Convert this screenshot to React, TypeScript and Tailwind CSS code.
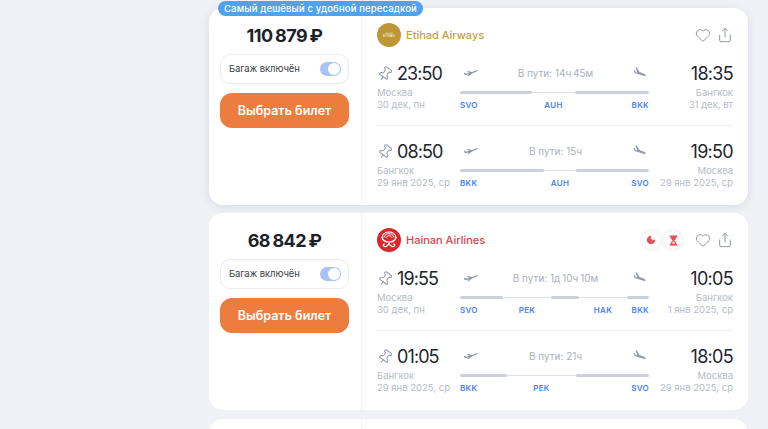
import { Heart, Moon, Pin, Share } from "lucide-react";

interface Segment {
  width: number;
  thin?: boolean;
  code?: string;
}

interface Leg {
  depTime: string;
  depCity: string;
  depDate: string;
  arrTime: string;
  arrCity: string;
  arrDate: string;
  duration: string;
  segments: Segment[];
}

const Plane: React.FC<{ landing?: boolean }> = ({ landing }) => (
  <svg viewBox="0 0 16 16" className="w-4 h-4 text-[#8f98a8]" fill="currentColor">
    {landing ? (
      <path d="M3.500 2.200l1.400.3 2.600 4.500 4 1.600c1.200.5 2.500 1.200 2.300 1.900-.2.7-1.700.5-3 .1L2.600 8.100 1.600 4.800l1 .2 1.400 2.200 1.300.4z" />
    ) : (
      <path d="M14.500 5.200c.4.5-.3 1.100-1.300 1.500L9 8.400l-3.200 2.600-1.600.3L6 9.300l-2.500.8-1.800-.2-.9-2.100.9-.1 1.500 1 3-.9L3.800 6.300 5 6l4 1 3.300-1.300c1-.4 1.900-.9 2.200-.5z" />
    )}
  </svg>
);

const EtihadLogo = () => (
  <div className="w-6 h-6 rounded-full bg-[#bd9636] flex flex-col items-center justify-center text-white text-[3px] leading-[3px] font-['Liberation_Sans',sans-serif]">
    <span className="opacity-80">الاتحاد</span>
    <span className="tracking-[0.2px]">ETIHAD</span>
  </div>
);

const HainanLogo = () => (
  <svg viewBox="0 0 24 24" className="w-6 h-6">
    <circle cx="12" cy="12" r="12" fill="#d9272e" />
    <g fill="none" stroke="#fff" strokeLinecap="round">
      <path d="M5 9.500C6 5.500 9 4 12 4s6 1.500 7 5.500" strokeWidth="1.100" />
      <path d="M7 9c1-2.500 3-3.300 5-3.300S16 6.500 17 9" strokeWidth="1" />
      <path d="M9 9.500c.8-1.200 1.800-1.700 3-1.700s2.200.5 3 1.700" strokeWidth="1" />
      <path d="M5 9.500c.8 3 3.500 4.500 7 4.500s6.200-1.500 7-4.500" strokeWidth="1.200" />
      <path d="M12 15.500c-1.500 3-3.500 3.500-5 2.800-1.200-.6-1-2.300.4-2.300" strokeWidth="1.200" />
      <path d="M12 15.500c1.500 3 3.500 3.500 5 2.800 1.200-.6 1-2.300-.4-2.300" strokeWidth="1.200" />
    </g>
  </svg>
);

const HourglassIcon = () => (
  <svg viewBox="0 0 12 12" className="w-[11px] h-[11px]" fill="#ea4b55">
    <rect x="2" y="0.500" width="8" height="1.800" />
    <rect x="2" y="9.700" width="8" height="1.800" />
    <path d="M3 2.300h6v1.500L6.900 6 9 8.200v1.500H3V8.200L5.100 6 3 3.800z" />
    <path d="M4.200 9.200v-.6L6 6.800l1.800 1.800v.6z" fill="#fff" />
  </svg>
);

const Route: React.FC<{ segments: Segment[] }> = ({ segments }) => (
  <div className="flex w-[189px]">
    {segments.map((seg, index) => {
      const last = index === segments.length - 1;
      return (
        <div key={index} style={{ width: seg.width }} className="shrink-0 flex flex-col">
          <div className="h-[6px] flex items-center">
            {seg.thin ? (
              <div className="h-px w-full bg-[#dde1e8]" />
            ) : (
              <div className="h-[3px] w-full rounded-full bg-[#cbd1da]" />
            )}
          </div>
          <div
            className={`mt-[5px] h-[10px] text-[8px] leading-[10px] font-semibold text-[#4a80f5] tracking-[0.3px] flex ${
              seg.thin ? "justify-center" : last ? "justify-end" : "justify-start"
            }`}
          >
            {seg.code}
          </div>
        </div>
      );
    })}
  </div>
);

const LegRow: React.FC<{ leg: Leg }> = ({ leg }) => (
  <div className="flex">
    <div className="w-[83px] shrink-0">
      <div className="flex items-center gap-[4px] h-[24px]">
        <Pin className="w-4 h-4 text-[#8f98a8] rotate-[35deg]" strokeWidth={1.5} />
        <span className="text-[18px] leading-[24px] text-[#22262e] tracking-[-0.9px]">{leg.depTime}</span>
      </div>
      <div className="text-[9.5px] leading-[13px] text-[#b5bbc6]">{leg.depCity}</div>
      <div className="text-[9.5px] leading-[12px] text-[#b5bbc6] whitespace-nowrap">{leg.depDate}</div>
    </div>
    <div className="w-[189px] shrink-0">
      <div className="flex items-center justify-between h-[22px] pl-[3px] pr-[1px]">
        <Plane />
        <span className="text-[10px] leading-[13px] text-[#aab1bd]">{leg.duration}</span>
        <Plane landing />
      </div>
      <div className="mt-[5px]">
        <Route segments={leg.segments} />
      </div>
    </div>
    <div className="flex-1 text-right">
      <div className="text-[18px] leading-[24px] text-[#22262e] tracking-[-0.7px]">{leg.arrTime}</div>
      <div className="text-[9.5px] leading-[13px] text-[#b5bbc6]">{leg.arrCity}</div>
      <div className="text-[9.5px] leading-[12px] text-[#b5bbc6] whitespace-nowrap">{leg.arrDate}</div>
    </div>
  </div>
);

const Card: React.FC<{
  price: string;
  airline: string;
  airlineColor: string;
  logo: React.ReactNode;
  legs: [Leg, Leg];
  badge?: string;
  flags?: boolean;
}> = ({ price, airline, airlineColor, logo, legs, badge, flags }) => (
  <div
    className={`relative bg-white rounded-[14px] flex h-[197px] ${
      badge ? "shadow-[0_2px_10px_rgba(60,70,100,0.12)]" : ""
    }`}
  >
    {badge && (
      <div className="absolute left-[9px] -top-[7px] h-[15px] px-[6px] rounded-full bg-[#4ea3f1] text-white text-[9.5px] leading-[15px] font-medium tracking-[0.15px] whitespace-nowrap">
        {badge}
      </div>
    )}
    <div className="w-[153px] shrink-0 border-r border-[#f3f4f7] px-[11px] pr-[12px] pt-[17px]">
      <div className="text-center text-[18px] leading-[22px] font-bold text-[#1d2129] tracking-[-0.5px]">{price}</div>
      <div className="mt-[7px] h-[30px] rounded-[10px] border border-[#e9ebf0] flex items-center justify-between pl-[8px] pr-[7px]">
        <span className="text-[9.5px] pt-[1px] tracking-[-0.1px] text-[#3a3f48]">Багаж включён</span>
        <div className="w-[21px] h-[14px] rounded-full bg-[#a9c3f6] flex items-center justify-end pr-[1px]">
          <div className="w-[12px] h-[12px] rounded-full bg-white" />
        </div>
      </div>
      <button className="mt-[9px] w-full h-[35px] pt-[1px] rounded-[12px] bg-[#ec7d3f] text-white text-[12.5px] font-semibold">
        Выбрать билет
      </button>
    </div>
    <div className="flex-1 pl-[15px] pr-[15px] pt-[15px]">
      <div className="flex items-center h-[24px]">
        {logo}
        <span className="ml-[5px] text-[11px] font-medium" style={{ color: airlineColor }}>
          {airline}
        </span>
        <div className="ml-auto flex items-center">
          {flags && (
            <div className="flex items-center gap-[4px] mr-[13px]">
              <div className="w-[18px] h-[18px] rounded-full bg-white shadow-[0_0_4px_rgba(60,70,100,0.15)] flex items-center justify-center">
                <Moon className="w-[10px] h-[10px] text-[#ea4b55] fill-[#ea4b55]" />
              </div>
              <div className="w-[18px] h-[18px] rounded-full bg-white shadow-[0_0_4px_rgba(60,70,100,0.15)] flex items-center justify-center">
                <HourglassIcon />
              </div>
            </div>
          )}
          <Heart className="w-[16px] h-[16px] text-[#8f98a8]" strokeWidth={1.5} />
          <Share className="ml-[6px] w-[16px] h-[16px] text-[#8f98a8]" strokeWidth={1.5} />
        </div>
      </div>
      <div className="mt-[15px]">
        <LegRow leg={legs[0]} />
      </div>
      <div className="mt-[14px] mb-[14px] h-px bg-[#eef0f3]" />
      <LegRow leg={legs[1]} />
    </div>
  </div>
);

export default function App() {
  return (
    <div className="h-[429px] overflow-hidden bg-[#eff1f6] font-['Inter',sans-serif]">
      <div className="ml-[209px] w-[539px] pt-[8px] flex flex-col gap-[8px]">
        <Card
          badge="Самый дешёвый с удобной пересадкой"
          price={"110\u2009879\u2009₽"}
          airline="Etihad Airways"
          airlineColor="#c49f3e"
          logo={<EtihadLogo />}
          legs={[
            {
              depTime: "23:50",
              depCity: "Москва",
              depDate: "30 дек, пн",
              arrTime: "18:35",
              arrCity: "Бангкок",
              arrDate: "31 дек, вт",
              duration: "В пути: 14ч\u200945м",
              segments: [
                { width: 72, code: "SVO" },
                { width: 43, thin: true, code: "AUH" },
                { width: 74, code: "BKK" },
              ],
            },
            {
              depTime: "08:50",
              depCity: "Бангкок",
              depDate: "29 янв 2025, ср",
              arrTime: "19:50",
              arrCity: "Москва",
              arrDate: "29 янв 2025, ср",
              duration: "В пути: 15ч",
              segments: [
                { width: 84, code: "BKK" },
                { width: 32, thin: true, code: "AUH" },
                { width: 73, code: "SVO" },
              ],
            },
          ]}
        />
        <Card
          flags
          price={"68\u2009842\u2009₽"}
          airline="Hainan Airlines"
          airlineColor="#d8434a"
          logo={<HainanLogo />}
          legs={[
            {
              depTime: "19:55",
              depCity: "Москва",
              depDate: "30 дек, пн",
              arrTime: "10:05",
              arrCity: "Бангкок",
              arrDate: "1 янв 2025, ср",
              duration: "В пути: 1д\u200910ч\u200910м",
              segments: [
                { width: 43, code: "SVO" },
                { width: 48, thin: true, code: "PEK" },
                { width: 28 },
                { width: 48, thin: true, code: "HAK" },
                { width: 22, code: "BKK" },
              ],
            },
            {
              depTime: "01:05",
              depCity: "Бангкок",
              depDate: "29 янв 2025, ср",
              arrTime: "18:05",
              arrCity: "Москва",
              arrDate: "29 янв 2025, ср",
              duration: "В пути: 21ч",
              segments: [
                { width: 47, code: "BKK" },
                { width: 69, thin: true, code: "PEK" },
                { width: 73, code: "SVO" },
              ],
            },
          ]}
        />
        <div className="mt-[1px] bg-white rounded-[14px] h-[100px] flex">
          <div className="w-[153px] border-r border-[#f3f4f7]" />
        </div>
      </div>
    </div>
  );
}
